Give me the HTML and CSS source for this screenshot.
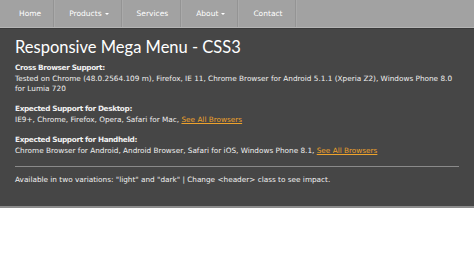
FILE: index.html
```html
<!DOCTYPE html>
<html>
<head>
<meta charset="utf-8">
<link rel="stylesheet" href="styles.css">
</head>
<body>
<header class="dark">
  <nav class="menu">
    <a class="item" href="#">Home</a>
    <a class="item has-sub" href="#">Products <span class="caret"></span></a>
    <a class="item" href="#">Services</a>
    <a class="item has-sub" href="#">About <span class="caret"></span></a>
    <a class="item" href="#">Contact</a>
  </nav>
  <section class="content">
    <h1 class="title">Responsive Mega Menu - CSS3</h1>
    <p class="para"><strong>Cross Browser Support:</strong><br>Tested on Chrome (48.0.2564.109 m), Firefox, IE 11, Chrome Browser for Android 5.1.1 (Xperia Z2), Windows Phone 8.0 for Lumia 720</p>
    <p class="para"><strong>Expected Support for Desktop:</strong><br>IE9+, Chrome, Firefox, Opera, Safari for Mac, <a class="link" href="#">See All Browsers</a></p>
    <p class="para"><strong>Expected Support for Handheld:</strong><br>Chrome Browser for Android, Android Browser, Safari for iOS, Windows Phone 8.1, <a class="link" href="#">See All Browsers</a></p>
    <hr class="rule">
    <p class="para note">Available in two variations: "light" and "dark" | Change &lt;header&gt; class to see impact.</p>
  </section>
</header>
</body>
</html>
```
FILE: styles.css
```css
html, body {
  margin: 0;
  padding: 0;
  background: #ffffff;
}
body {
  font-family: "DejaVu Sans", Verdana, sans-serif;
}
.dark {
  background: #464646;
  border-bottom: 2px solid #8c8c8c;
}
.menu {
  display: flex;
  height: 27px;
  padding-left: 4px;
  background: #a2a2a2;
  border-bottom: 1px solid #b4b4b4;
  box-shadow: 0 1px 0 #3a3a3a;
}
.item {
  display: flex;
  align-items: center;
  padding: 0 12px 0 15px;
  color: #ffffff;
  text-decoration: none;
  font-size: 7.5px;
  border-right: 1px solid #949494;
  box-shadow: 1px 0 0 #aaaaaa;
}
.caret {
  display: inline-block;
  width: 0;
  height: 0;
  margin-left: 3px;
  border-left: 2px solid transparent;
  border-right: 2px solid transparent;
  border-top: 2px solid #ffffff;
}
.content {
  padding: 9px 15px 21px;
  color: #f0f0f0;
}
.title {
  margin: 0 0 6px;
  font-family: Lato, "DejaVu Sans", sans-serif;
  font-size: 16.5px;
  font-weight: normal;
  color: #ffffff;
  line-height: 20px;
}
.para {
  margin: 0 0 9.5px;
  font-size: 7.3px;
  line-height: 10.6px;
}
.para strong {
  font-weight: bold;
  letter-spacing: -0.35px;
}
.link {
  color: #eda22c;
  text-decoration: underline;
}
.rule {
  border: 0;
  border-top: 1px solid #8a8a8a;
  margin: 0 0 8px;
}
.note {
  margin: 0;
}
```
